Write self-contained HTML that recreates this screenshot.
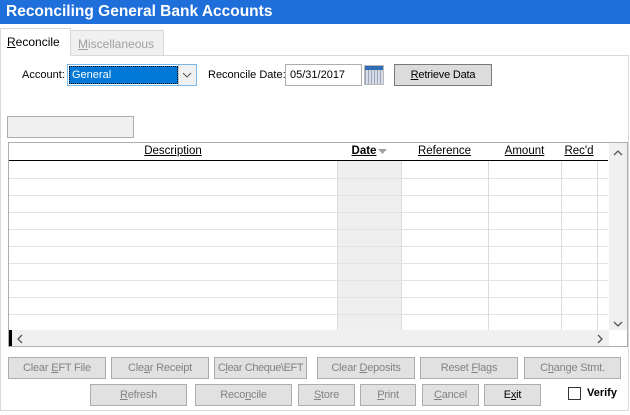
<!DOCTYPE html>
<html><head><style>
*{margin:0;padding:0;box-sizing:border-box}
body{width:630px;height:415px;background:#fff;font-family:"Liberation Sans",Arial,sans-serif;font-size:11px;color:#000;position:relative;overflow:hidden}
.a{position:absolute;white-space:nowrap}
.title{left:0;top:0;width:630px;height:24px;background:#1e6fd9;color:#fff;font-weight:bold;font-size:15.5px;line-height:24px;padding-left:6px}
.btn{position:absolute;white-space:nowrap;overflow:hidden;height:22px;background:#e1e1e1;border:1px solid #adadad;color:#838383;text-align:center;line-height:20px;font-size:11px;letter-spacing:-0.2px}
.u{text-decoration:underline}
.hd{position:absolute;top:145px;font-size:11.5px;text-decoration:underline;text-align:center}
.vl{position:absolute;top:161px;height:169px;width:1px;background:#dcdcdc}
.hl{position:absolute;left:9px;width:599px;height:1px;background:#e3e3e3}
</style></head><body>
<div class="a title">Reconciling General Bank Accounts</div>
<div class="a" style="left:0;top:55px;width:629px;height:356px;border:1px solid #d9d9d9"></div>
<div class="a" style="left:0;top:28px;width:71px;height:28px;border:1px solid #d9d9d9;border-bottom:none;background:#fff;padding:6px 0 0 6px;font-size:12px"><span class="u">R</span>econcile</div>
<div class="a" style="left:70px;top:30px;width:94px;height:25px;border:1px solid #d9d9d9;border-bottom:none;background:#f0f0f0;color:#a0a0a0;padding:6px 0 0 7px;font-size:12px"><span class="u">M</span>iscellaneous</div>
<div class="a" style="left:22px;top:69px">Account:</div>
<div class="a" style="left:67px;top:64px;width:130px;height:22px;border:1px solid #7ab8ea;background:#fff"></div>
<div class="a" style="left:69px;top:66px;width:109px;height:18px;background:#0078d7;color:#fff;padding:2px 0 0 2px;border:1px dotted #000">General</div>
<div class="a" style="left:178px;top:65px;width:18px;height:20px;border-left:1px solid #c6c6c6;background:#f0f0f0"><svg width="18" height="20"><path d="M4 8l4 4 4-4" stroke="#555" fill="none"/></svg></div>
<div class="a" style="left:208px;top:69px">Reconcile Date:</div>
<div class="a" style="left:285px;top:64px;width:77px;height:22px;border:1px solid #adadad;padding:4px 0 0 4px">05/31/2017</div>
<div class="a" style="left:364px;top:65px;width:20px;height:20px;border:1px solid #bbb;background:repeating-linear-gradient(90deg,#9aa6b8 0 1px,#d7dde6 1px 3px)"><div style="height:4px;background:#2f6db4"></div></div>
<div class="btn" style="left:394px;top:64px;width:98px;height:22px;color:#000;border-color:#7a7a7a;background:#dcdcdc"><span class="u">R</span>etrieve Data</div>
<div class="a" style="left:7px;top:116px;width:127px;height:22px;border:1px solid #adadad;background:#f0f0f0"></div>
<div class="a" style="left:8px;top:142px;width:620px;height:205px;border:1px solid #adadad"></div>
<div class="a" style="left:338px;top:161px;width:63px;height:169px;background:#efefef"></div>
<div class="hl" style="top:178px"></div><div class="hl" style="top:195px"></div><div class="hl" style="top:212px"></div><div class="hl" style="top:229px"></div><div class="hl" style="top:246px"></div><div class="hl" style="top:263px"></div><div class="hl" style="top:280px"></div><div class="hl" style="top:297px"></div><div class="hl" style="top:314px"></div>
<div class="vl" style="left:337px"></div><div class="vl" style="left:401px"></div><div class="vl" style="left:488px"></div><div class="vl" style="left:561px"></div><div class="vl" style="left:597px"></div>
<div class="a" style="left:9px;top:160px;width:599px;height:1px;background:#000"></div>
<div class="hd" style="left:9px;width:328px">Description</div>
<div class="hd" style="left:340px;width:48px;font-weight:bold">Date</div>
<svg class="a" style="left:378px;top:149px" width="10" height="6"><path d="M0 0h9L4.5 5z" fill="#a0a0a0"/></svg>
<div class="hd" style="left:401px;width:87px">Reference</div>
<div class="hd" style="left:488px;width:73px">Amount</div>
<div class="hd" style="left:561px;width:36px">Rec'd</div>
<div class="a" style="left:609px;top:143px;width:18px;height:187px;background:#f0f0f0"></div>
<svg class="a" style="left:613px;top:149px" width="10" height="8"><path d="M1 6l4-4 4 4" stroke="#555" fill="none" stroke-width="1.3"/></svg>
<svg class="a" style="left:613px;top:320px" width="10" height="8"><path d="M1 2l4 4 4-4" stroke="#555" fill="none" stroke-width="1.3"/></svg>
<div class="a" style="left:9px;top:330px;width:600px;height:16px;background:#f0f0f0"></div>
<div class="a" style="left:9px;top:330px;width:3px;height:16px;background:#000"></div>
<svg class="a" style="left:16px;top:334px" width="8" height="10"><path d="M6 1L2 5l4 4" stroke="#555" fill="none" stroke-width="1.3"/></svg>
<svg class="a" style="left:596px;top:334px" width="8" height="10"><path d="M2 1l4 4-4 4" stroke="#555" fill="none" stroke-width="1.3"/></svg>
<div class="btn" style="left:8px;top:357px;width:98px">Clear <span class="u">E</span>FT File</div>
<div class="btn" style="left:111px;top:357px;width:98px">Cle<span class="u">a</span>r Receipt</div>
<div class="btn" style="left:214px;top:357px;width:93px;letter-spacing:-0.4px">C<span class="u">l</span>ear Cheque\EFT</div>
<div class="btn" style="left:317px;top:357px;width:98px">Clear <span class="u">D</span>eposits</div>
<div class="btn" style="left:420px;top:357px;width:98px">Reset <span class="u">F</span>lags</div>
<div class="btn" style="left:524px;top:357px;width:97px">C<span class="u">h</span>ange Stmt.</div>
<div class="btn" style="left:90px;top:384px;width:97px"><span class="u">R</span>efresh</div>
<div class="btn" style="left:195px;top:384px;width:97px">Reco<span class="u">n</span>cile</div>
<div class="btn" style="left:298px;top:384px;width:57px"><span class="u">S</span>tore</div>
<div class="btn" style="left:360px;top:384px;width:56px"><span class="u">P</span>rint</div>
<div class="btn" style="left:422px;top:384px;width:57px"><span class="u">C</span>ancel</div>
<div class="btn" style="left:484px;top:384px;width:57px;color:#000">E<span class="u">x</span>it</div>
<div class="a" style="left:568px;top:387px;width:13px;height:13px;border:1px solid #333;background:#fff"></div>
<div class="a" style="left:587px;top:387px;font-weight:bold">Verify</div>
</body></html>
